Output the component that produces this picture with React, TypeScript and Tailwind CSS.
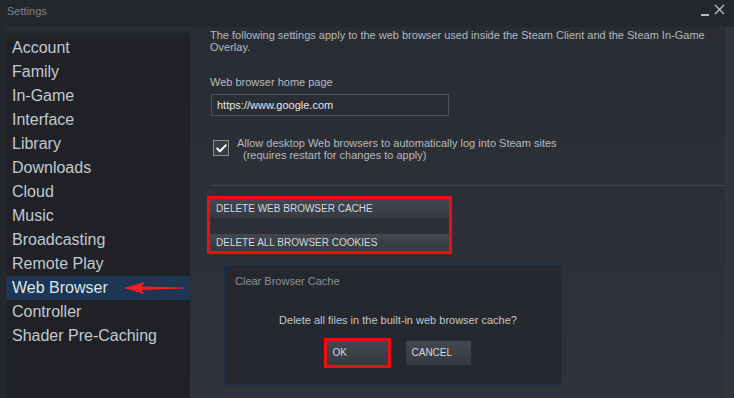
import { Check } from 'lucide-react'

const NAV = [
  'Account',
  'Family',
  'In-Game',
  'Interface',
  'Library',
  'Downloads',
  'Cloud',
  'Music',
  'Broadcasting',
  'Remote Play',
  'Web Browser',
  'Controller',
  'Shader Pre-Caching',
]

function RedArrow() {
  return (
    <svg className="absolute left-[112px] top-[5px]" width="68" height="14" viewBox="0 0 68 14">
      <path d="M6 7 L26 1 L24 5.5 L66 6.5 L66 7.5 L24 9 L26 13 Z" fill="#f21d1d" />
    </svg>
  )
}

function SidebarItem({ label, active }: { label: string; active: boolean }) {
  return (
    <div
      className={
        'relative h-[24px] pl-[6px] flex items-center text-[16px] leading-none ' +
        (active ? 'bg-[#1c3653] text-[#dfe6ec]' : 'text-[#c3c9cf]')
      }
    >
      {label}
      {active && <RedArrow />}
    </div>
  )
}

function SteamButton({ label, className = '' }: { label: string; className?: string }) {
  return (
    <div
      className={
        'flex items-center px-[6px] text-[10px] text-[#d2d8de] bg-gradient-to-b from-[#434750] to-[#363940] ' +
        className
      }
    >
      {label}
    </div>
  )
}

export default function App() {
  return (
    <div
      className="w-[734px] h-[398px] flex flex-col bg-[#24272c] overflow-hidden"
      style={{ fontFamily: '"Liberation Sans", Arial, sans-serif' }}
    >
      {/* title bar */}
      <div className="h-[27px] shrink-0 flex items-start justify-between">
        <div className="pl-[7px] pt-[3px] text-[11px] text-[#7d848c]">Settings</div>
        <div className="flex items-start gap-[5px] pr-[9px] pt-[4px] text-[#b6bbc1]">
          <div className="mt-[10px] w-[8px] h-[1.5px] bg-[#b6bbc1]" />
          <svg width="11" height="11" viewBox="0 0 11 11">
            <path d="M1 1 L10 10 M10 1 L1 10" stroke="#b6bbc1" strokeWidth="1.4" />
          </svg>
        </div>
      </div>

      <div className="flex-1 flex pl-[6px] min-h-0">
        {/* sidebar */}
        <div className="w-[184px] shrink-0 bg-gradient-to-b from-[#2b2f36] via-[#202227] via-[3%] to-[#1f2126] pt-[9px]">
          {NAV.map((n) => (
            <SidebarItem key={n} label={n} active={n === 'Web Browser'} />
          ))}
        </div>

        {/* content */}
        <div className="flex-1 flex min-w-0 bg-gradient-to-b from-[#292c32] to-[#30333a]">
          <div className="flex-1 pl-[20px] pt-[2px] text-[11px] leading-[12px] text-[#b4bac0]">
            <p>
              The following settings apply to the web browser used inside the Steam Client and the Steam In-Game
              <br />
              Overlay.
            </p>

            <div className="mt-[23px]">Web browser home page</div>
            <div className="mt-[6px] ml-[1px] w-[238px] h-[22px] border border-[#4b505a] bg-[#2a2d33] flex items-center pl-[5px] text-[#e2e6ea]">
              https://www.google.com
            </div>

            <div className="mt-[24px] flex items-start">
              <div className="ml-[3px] w-[16px] h-[16px] border border-[#8a8f96] bg-[#3a3d44] flex items-center justify-center">
                <Check size={13} strokeWidth={3.5} color="#ffffff" />
              </div>
              <div className="ml-[8px] -mt-[3px] leading-[12px]">
                Allow desktop Web browsers to automatically log into Steam sites
                <br />
                <span className="pl-[6px]">(requires restart for changes to apply)</span>
              </div>
            </div>

            <div className="mt-[24px] h-px bg-[#41454d]" />

            <div className="mt-[10px] -ml-[3px] w-[245px] border-[3px] border-[#f10d0d] flex flex-col">
              <SteamButton label="DELETE WEB BROWSER CACHE" className="h-[19px]" />
              <div className="h-[16px]" />
              <SteamButton label="DELETE ALL BROWSER COOKIES" className="h-[17px]" />
            </div>

            <div className="mt-[11px] ml-[14px] w-[338px] h-[120px] border border-[#1b3149] bg-[#25282e] flex flex-col">
              <div className="pl-[10px] pt-[9px] text-[#8a9097]">Clear Browser Cache</div>
              <div className="mt-[27px] text-center text-[#c1c7cd] pl-[10px]">
                Delete all files in the built-in web browser cache?
              </div>
              <div className="mt-[12px] flex justify-center gap-[15px] pl-[8px]">
                <div className="border-[3px] border-[#f10d0d]">
                  <SteamButton label="OK" className="w-[61px] h-[24px]" />
                </div>
                <div className="pt-[3px]">
                  <SteamButton label="CANCEL" className="w-[65px] h-[24px]" />
                </div>
              </div>
            </div>
          </div>
          <div className="w-[9px] shrink-0 bg-[#32353c]" />
        </div>
      </div>
    </div>
  )
}
